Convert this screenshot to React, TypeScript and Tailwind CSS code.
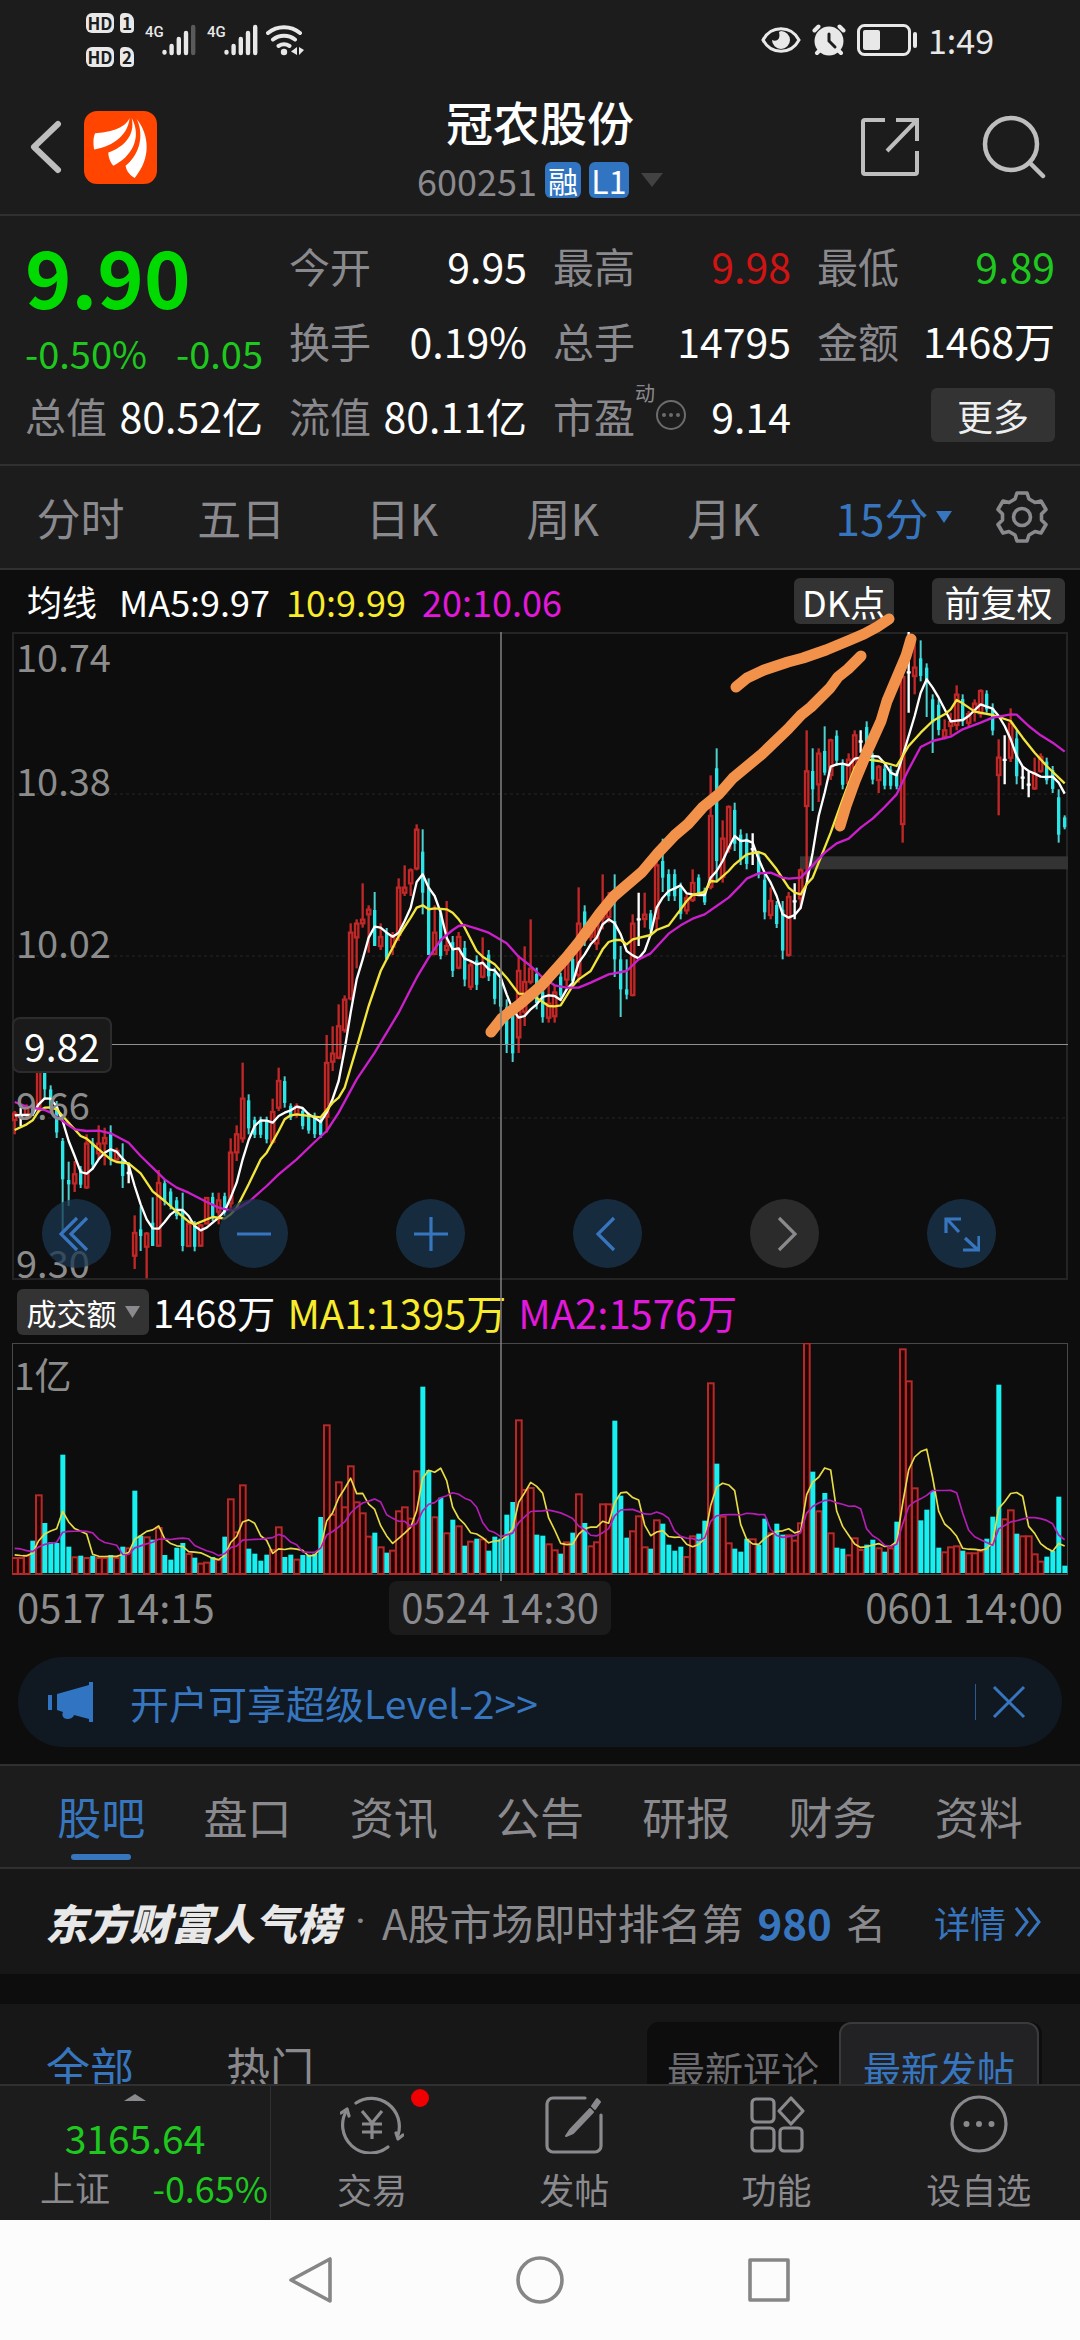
import React from 'react';

type Candle = [high: number, low: number, bodyTop?: number, bodyBottom?: number];
type Point = [x: number, y: number];

/* ---------- chart data ---------- */

// r = up, c = down, w = flat
// x = up candle on a falling volume bar, y = the other way round
const KINDS = [
  'rwrcrccccc',
  'rcrcrrcrcw',
  'xcrcrccccr',
  'crrcrcrrrc',
  'cccrrccrcc',
  'ccrrrrrrrr',
  'crcrrrrrcc',
  'rcrcrcrcrc',
  'ccccrrrccr',
  'rcrcrcrrrr',
  'cccrwrcrcc',
  'ccrrccrcrr',
  'cccwccrccr',
  'wrrcrcrccr',
  'rwccrcycrw',
  'rccccrrrcr',
  'rrccxwrcww',
  'rrcccc',
].join('');

const STEP = 18;

const CANDLES: Candle[] = [
  [1655, 1725, 1660, 1685], [1645, 1700], [1635, 1675], [1630, 1670], [1510, 1660, 1520, 1650], [1510, 1620, 1530, 1590],
  [1578, 1660], [1625, 1736], [1736, 2020, 1745, 1860], [1807, 1940, 1862, 1875], [1805, 1898, 1842, 1875], [1820, 1886],
  [1725, 1889, 1750, 1887], [1736, 1830], [1698, 1800, 1750, 1785], [1705, 1818, 1733, 1755], [1698, 1818, 1720, 1800],
  [1765, 1810], [1752, 1886, 1800, 1850], [1810, 1872], [1968, 2129, 2018, 2092], [1941, 2075, 2010, 2030],
  [2018, 2157, 2020, 2065], [1914, 2060, 1990, 2060], [1832, 2062, 1868, 2062], [1860, 1938], [1887, 1950], [1913, 1980],
  [1900, 2076, 1955, 2060], [1990, 2063, 1990, 2063], [1985, 2076], [1995, 2062, 1995, 2062], [1913, 1995, 1913, 1995],
  [1900, 1985], [1900, 1995, 1920, 1960], [1900, 1970], [1737, 1950, 1777, 1935], [1698, 1805, 1722, 1782],
  [1510, 1750, 1615, 1740], [1605, 1725], [1672, 1736], [1672, 1736], [1672, 1752], [1618, 1753, 1655, 1750],
  [1525, 1655, 1562, 1648], [1551, 1645], [1632, 1682], [1632, 1675], [1645, 1710], [1660, 1723], [1660, 1736],
  [1675, 1736], [1427, 1720, 1508, 1675], [1401, 1535, 1480, 1510], [1335, 1500, 1398, 1498], [1308, 1420, 1318, 1415],
  [1092, 1323, 1117, 1320], [1080, 1227, 1090, 1137], [972, 1105, 1078, 1095], [1038, 1180, 1048, 1068],
  [998, 1160, 1052, 1160], [1092, 1172, 1130, 1163], [1106, 1200, 1120, 1200], [1118, 1187, 1130, 1165],
  [957, 1145, 982, 1130], [918, 1010, 982, 1003], [927, 1010, 930, 975], [795, 933, 808, 930], [810, 1065, 877, 1000],
  [957, 1187, 985, 1187], [1038, 1187, 1117, 1187], [1050, 1200, 1060, 1190], [1025, 1187, 1157, 1175], [1130, 1253],
  [1118, 1230, 1130, 1228], [1145, 1281], [1205, 1292, 1215, 1285], [1188, 1292], [1134, 1257, 1210, 1255], [1172, 1265],
  [1225, 1335], [1240, 1360], [1320, 1481], [1335, 1508], [1188, 1481], [1161, 1400, 1265, 1360], [1080, 1275, 1225, 1270],
  [1225, 1350], [1280, 1390], [1270, 1390, 1330, 1378], [1280, 1390], [1240, 1320], [1170, 1280], [1185, 1280],
  [984, 1270, 1090, 1250], [1038, 1160], [1080, 1145], [1060, 1172], [945, 1110, 1035, 1080], [998, 1090],
  [945, 1253, 1085, 1200], [1160, 1373, 1200, 1290], [1200, 1320, 1290, 1306], [1065, 1311, 1090, 1310], [1000, 1160],
  [1000, 1105, 1063, 1082], [1052, 1120], [900, 1110, 915, 1080], [838, 998, 905, 955], [930, 1025], [930, 1025],
  [970, 1080], [1005, 1065], [930, 1028, 968, 1025], [945, 1010], [985, 1037], [648, 990, 767, 985], [567, 965],
  [783, 970, 835, 955], [738, 880, 740, 870], [730, 875], [810, 917], [822, 930], [822, 917], [880, 957], [940, 1080],
  [984, 1080, 1022, 1070], [1025, 1106], [1025, 1200], [998, 1192, 1010, 1190], [972, 1080], [927, 1050, 930, 1020],
  [513, 960, 633, 743], [567, 755, 635, 690], [567, 728, 580, 678], [501, 648, 575, 640], [538, 662, 540, 650],
  [513, 620], [600, 690], [582, 690], [513, 640, 525, 630], [513, 580], [486, 600], [580, 675], [617, 701, 620, 665],
  [617, 690], [620, 690], [633, 690], [340, 850, 350, 797], [218, 460], [245, 405, 322, 353], [243, 366, 297, 350],
  [312, 473, 325, 370], [405, 581, 420, 490], [420, 528], [480, 540, 510, 535], [460, 528, 485, 503], [378, 513, 403, 500],
  [405, 500], [455, 500], [420, 487, 430, 460], [390, 475, 392, 465], [393, 460], [432, 528], [540, 768, 592, 650],
  [528, 675], [447, 608, 490, 598], [513, 675], [620, 690], [638, 714], [595, 692, 640, 690], [582, 640, 590, 638],
  [595, 675], [620, 701], [690, 850], [768, 810],
];

const MA5 = [
  1668, 1667, 1667, 1666, 1635, 1617, 1618, 1642, 1685, 1745, 1790, 1838, 1843, 1828, 1800, 1780, 1770, 1777, 1798, 1817,
  1880, 1935, 1980, 2007, 2008, 1988, 1965, 1952, 1952, 1970, 2000, 2013, 2005, 1990, 1975, 1955, 1915, 1870, 1800, 1742,
  1700, 1683, 1684, 1690, 1670, 1660, 1653, 1642, 1646, 1665, 1675, 1688, 1660, 1618, 1565, 1470, 1360, 1260, 1200, 1135,
  1102, 1105, 1120, 1132, 1120, 1085, 1045, 968, 945, 985, 1010, 1060, 1135, 1170, 1167, 1198, 1205, 1215, 1210, 1230,
  1233, 1255, 1305, 1350, 1375, 1370, 1350, 1335, 1313, 1308, 1310, 1322, 1290, 1270, 1210, 1185, 1155, 1135, 1095, 1080,
  1092, 1125, 1175, 1188, 1197, 1175, 1125, 1045, 1015, 995, 987, 978, 1002, 1005, 1007, 1007, 955, 935, 905, 865, 830,
  845, 843, 850, 900, 940, 970, 1010, 1065, 1075, 1067, 1045, 970, 880, 770, 700, 622, 615, 613, 618, 598, 595, 592, 590,
  592, 612, 640, 648, 590, 530, 470, 400, 360, 385, 415, 450, 486, 484, 482, 470, 452, 435, 442, 448, 470, 500, 540, 590,
  622, 635, 643, 652, 653, 652, 670, 703,
];

// longer averages are smooth enough to be kept as [bar, value] knots
const MA10: Point[] = [
  [0, 1712], [2, 1695], [3, 1683], [4, 1655], [5, 1645], [6, 1644], [7, 1650], [8, 1670], [11, 1730], [12, 1738],
  [14, 1770], [16, 1800], [17, 1808], [19, 1812], [21, 1842], [23, 1896], [25, 1925], [27, 1957], [29, 1987], [30, 1995],
  [33, 1973], [35, 1978], [36, 1965], [37, 1945], [39, 1875], [41, 1800], [42, 1780], [44, 1715], [45, 1680], [46, 1668],
  [47, 1665], [51, 1674], [53, 1630], [54, 1615], [55, 1585], [57, 1465], [59, 1340], [61, 1235], [62, 1200], [64, 1130],
  [66, 1075], [67, 1045], [68, 1038], [69, 1050], [70, 1047], [72, 1050], [73, 1060], [74, 1080], [75, 1105], [77, 1175],
  [78, 1192], [80, 1215], [82, 1255], [84, 1303], [86, 1304], [88, 1328], [89, 1340], [90, 1341], [91, 1338], [93, 1280],
  [94, 1260], [96, 1235], [98, 1170], [99, 1148], [100, 1142], [101, 1142], [102, 1155], [103, 1140], [106, 1127],
  [107, 1112], [109, 1098], [111, 1050], [112, 1025], [113, 1007], [115, 998], [116, 965], [117, 967], [119, 935],
  [120, 915], [122, 885], [124, 878], [125, 885], [127, 930], [129, 985], [130, 1000], [131, 1005], [132, 975],
  [133, 955], [134, 910], [136, 820], [138, 720], [140, 625], [141, 600], [142, 600], [144, 605], [147, 620], [148, 590],
  [149, 560], [151, 520], [153, 485], [155, 465], [156, 450], [157, 422], [158, 432], [160, 457], [163, 467], [166, 485],
  [168, 535], [170, 580], [172, 620], [175, 672],
];

const MA20: Point[] = [
  [0, 1628], [2, 1642], [5, 1652], [6, 1660], [8, 1685], [10, 1710], [12, 1715], [14, 1714], [16, 1722], [19, 1750],
  [21, 1790], [23, 1825], [25, 1860], [27, 1885], [29, 1900], [32, 1928], [34, 1945], [36, 1953], [37, 1950], [39, 1928],
  [42, 1880], [44, 1845], [47, 1800], [50, 1748], [52, 1715], [54, 1660], [57, 1560], [60, 1480], [62, 1420], [64, 1360],
  [66, 1290], [67, 1255], [69, 1195], [71, 1142], [73, 1112], [74, 1100], [75, 1097], [77, 1108], [79, 1120], [82, 1152],
  [84, 1192], [86, 1220], [88, 1255], [90, 1278], [92, 1285], [94, 1285], [96, 1270], [99, 1245], [102, 1235],
  [104, 1200], [106, 1182], [109, 1123], [111, 1098], [113, 1078], [115, 1065], [117, 1040], [119, 1015], [121, 978],
  [122, 958], [124, 942], [126, 940], [128, 955], [129, 958], [131, 955], [133, 918], [135, 880], [137, 852], [139, 838],
  [141, 805], [143, 778], [145, 743], [147, 705], [149, 630], [151, 563], [153, 545], [156, 532], [158, 510], [161, 490],
  [163, 475], [164, 472], [166, 465], [167, 466], [169, 500], [171, 528], [173, 550], [175, 577],
];

const VOLUMES = [
  51, 51, 58, 100, 239, 153, 95, 93, 358, 82, 53, 55, 51, 55, 51, 51, 57, 51, 82, 80, 250, 115, 113, 103, 141, 57, 43, 79,
  93, 63, 49, 34, 37, 51, 45, 112, 227, 128, 269, 76, 61, 40, 58, 75, 143, 51, 58, 46, 57, 58, 61, 171, 449, 181, 278,
  203, 326, 218, 185, 115, 124, 83, 64, 73, 191, 203, 169, 311, 562, 312, 173, 229, 125, 163, 146, 85, 100, 106, 107, 70,
  112, 106, 178, 216, 464, 255, 261, 118, 115, 92, 74, 61, 98, 124, 242, 153, 86, 98, 212, 212, 460, 235, 109, 131, 176,
  83, 76, 164, 151, 88, 70, 82, 54, 116, 121, 160, 575, 331, 175, 95, 76, 67, 106, 107, 88, 166, 125, 151, 118, 119, 103,
  155, 695, 307, 191, 243, 125, 79, 76, 59, 110, 75, 88, 103, 80, 67, 80, 157, 677, 581, 260, 161, 193, 249, 79, 68, 83,
  86, 70, 65, 65, 71, 106, 172, 568, 167, 194, 121, 116, 116, 62, 40, 52, 70, 232, 25,
];
const EARLIER_VOLUMES = [70, 110, 130, 95, 80, 60, 62, 58, 55];

const candleKind = (i: number) => {
  const k = KINDS[i];
  if (k === 'x') return 'r';
  if (k === 'y') return 'c';
  return k;
};
const volumeUp = (i: number) => 'rwy'.includes(KINDS[i]);
const barX = (i: number) => i * STEP + 8;

const toPoints = (pts: Point[]) => pts.map(([i, v]) => `${barX(i)},${v}`).join(' ');

function volumeAverage(n: number): Point[] {
  const all = [...EARLIER_VOLUMES, ...VOLUMES];
  return VOLUMES.map((_, i) => {
    const end = i + EARLIER_VOLUMES.length + 1;
    const sum = all.slice(end - n, end).reduce((a, b) => a + b, 0);
    return [i, 693 - sum / n];
  });
}

/* ---------- small icons ---------- */

function Triangle({ className, up = false }: { className: string; up?: boolean }) {
  return (
    <svg viewBox="0 0 20 14" preserveAspectRatio="none" className={className} fill="currentColor" aria-hidden>
      <path d={up ? 'M0 14h20L10 0z' : 'M0 0h20L10 14z'} />
    </svg>
  );
}

function Signal({ dimLast = false }: { dimLast?: boolean }) {
  return (
    <svg viewBox="0 0 34 32" className="h-8 w-[34px]" stroke="#e8e8e8" strokeWidth="4.4" strokeLinecap="round" aria-hidden>
      <path d="M2.500 28v.5M9.600 22v7M16.800 15v14M24 9v20" />
      <path d="M31.200 3v26" stroke={dimLast ? '#5a5a5a' : '#e8e8e8'} />
    </svg>
  );
}

function SimBadge({ n }: { n: number }) {
  return (
    <span className="flex gap-[6px] text-[17px] leading-5 font-bold text-[#1c1c1c]">
      <span className="w-7 rounded-md bg-[#e8e8e8] text-center">HD</span>
      <span className="w-[14px] rounded-sm rounded-tr-lg bg-[#e8e8e8] text-center">{n}</span>
    </span>
  );
}

/* ---------- sections ---------- */

function StatusBar() {
  return (
    <div className="flex h-20 items-center justify-between px-[86px] text-[#e8e8e8]">
      <div className="flex items-center">
        <div className="flex flex-col gap-[14px]">
          <SimBadge n={1} />
          <SimBadge n={2} />
        </div>
        <span className="mb-4 ml-[11px] w-[17px] font-['Roboto'] text-[15px] leading-4 font-medium">4G</span>
        <Signal dimLast />
        <span className="mb-4 ml-[11px] w-[17px] font-['Roboto'] text-[15px] leading-4 font-medium">4G</span>
        <Signal />
        <svg viewBox="0 0 38 32" className="ml-2 h-8 w-[38px]" fill="none" stroke="#e8e8e8" strokeWidth="4" strokeLinecap="round" aria-hidden>
          <path d="M2 9a25 25 0 0 1 32 0M7 15.500a18 18 0 0 1 22 0M12.500 22a10 10 0 0 1 11 0" />
          <circle cx="18" cy="28" r="3.200" fill="#e8e8e8" stroke="none" />
          <path d="M31 23v8l-6-3.500zM33 23v8l5-5z" fill="#e8e8e8" stroke="none" />
        </svg>
      </div>
      <div className="flex items-center gap-[11px]">
        <svg viewBox="0 0 40 28" className="h-7 w-10" fill="none" stroke="#e8e8e8" strokeWidth="3" aria-hidden>
          <path d="M2 14C10-1 30-1 38 14 30 29 10 29 2 14z" />
          <path d="M20 5a9 9 0 1 1-9 9c4 2 9 0 7-8z" fill="#e8e8e8" stroke="none" />
        </svg>
        <svg viewBox="0 0 34 32" className="h-8 w-[34px]" fill="none" stroke="#e8e8e8" strokeWidth="4" strokeLinecap="round" aria-hidden>
          <circle cx="17" cy="17" r="14.500" fill="#e8e8e8" stroke="none" />
          <path d="M2.500 6.500l4-4M31.500 6.500l-4-4M5 29l3-3M29 29l-3-3" />
          <path d="M17 10v7l6 6" stroke="#1c1c1c" strokeWidth="3" />
        </svg>
        <svg viewBox="0 0 60 34" className="h-[34px] w-[60px]" aria-hidden>
          <rect x="1.500" y="2.500" width="51" height="29" rx="6" fill="none" stroke="#e8e8e8" strokeWidth="3" />
          <rect x="6" y="7" width="17" height="20" rx="2" fill="#e8e8e8" />
          <rect x="56" y="9" width="4" height="16" rx="2" fill="#e8e8e8" />
        </svg>
        <span className="text-[34px] leading-9">1:49</span>
      </div>
    </div>
  );
}

function Header() {
  return (
    <header className="grid h-[136px] grid-cols-[1fr_auto_1fr] items-center border-b-2 border-[#303030]">
      <div className="flex items-center gap-[22px] pl-[30px]">
        <button type="button" aria-label="返回">
          <svg viewBox="0 0 32 54" className="h-[54px] w-8" fill="none" stroke="#bebebe" strokeWidth="6" strokeLinecap="round" strokeLinejoin="round">
            <path d="M28 4L4 27l24 23" />
          </svg>
        </button>
        <svg viewBox="0 0 72 72" className="size-[73px]" aria-hidden>
          <rect width="72" height="72" rx="13" fill="#ff4500" />
          <g fill="#fff">
            <path d="M45 7C40 18 24 21 11 22c-2 4-2 10-1 16C24 36 43 27 45 7z" />
            <path d="M47 7c4 17-8 29-23 34 0 5 2 10 5 13C46 46 58 27 47 7z" />
            <path d="M52 8c12 15 15 38-2 58-4-2-8-6-9-12C54 44 60 25 52 8z" />
          </g>
        </svg>
      </div>
      <div className="flex flex-col items-center gap-4">
        <h1 className="text-[47px] leading-[50px] font-medium text-white">冠农股份</h1>
        <div className="flex items-center gap-2 text-[36px] leading-9 text-[#8a8a8e]">
          <span>600251</span>
          <span className="w-9 rounded-md bg-[#3174c2] text-center text-[30px] text-white">融</span>
          <span className="w-10 rounded-md bg-[#3174c2] text-center text-[32px] text-white">L1</span>
          <Triangle className="ml-1 h-[14px] w-[22px] text-[#424242]" />
        </div>
      </div>
      <div className="flex items-center justify-end gap-[62px] pr-[34px]">
        <button type="button" aria-label="分享">
          <svg viewBox="0 0 60 60" className="size-[60px]" fill="none" stroke="#bebebe" strokeWidth="4" strokeLinejoin="round">
            <path d="M25 3H5a2 2 0 0 0-2 2v50a2 2 0 0 0 2 2h50a2 2 0 0 0 2-2V34" />
            <path d="M36 3h21v21M57 3L27 34" strokeLinejoin="miter" />
          </svg>
        </button>
        <button type="button" aria-label="搜索">
          <svg viewBox="0 0 64 64" className="size-16" fill="none" stroke="#bebebe" strokeWidth="4.500" strokeLinecap="round">
            <circle cx="29" cy="29" r="26" />
            <path d="M48 48l13 13" />
          </svg>
        </button>
      </div>
    </header>
  );
}

function Stat({ label, value, color = 'text-white' }: { label: string; value: string; color?: string }) {
  return (
    <div className="flex items-center justify-between whitespace-nowrap">
      <dt className="text-[#8a8a8e]">{label}</dt>
      <dd className={color}>{value}</dd>
    </div>
  );
}

function Quote() {
  return (
    <section className="grid h-[250px] grid-cols-4 grid-rows-[75px_75px_75px] gap-x-[26px] border-b-2 border-[#303030] px-[25px] pt-[11px] text-[41px] leading-[48px]">
      <div className="row-span-2 flex flex-col justify-between pt-2 pb-[2px] text-[#00da00]">
        <strong className="text-[79px] leading-[80px] font-bold">9.90</strong>
        <div className="flex justify-between text-[38px] leading-[44px] text-[#1ec81e]">
          <span>-0.50%</span>
          <span>-0.05</span>
        </div>
      </div>
      <Stat label="今开" value="9.95" />
      <Stat label="最高" value="9.98" color="text-[#d01414]" />
      <Stat label="最低" value="9.89" color="text-[#1ec81e]" />
      <Stat label="换手" value="0.19%" />
      <Stat label="总手" value="14795" />
      <Stat label="金额" value="1468万" />
      <Stat label="总值" value="80.52亿" />
      <Stat label="流值" value="80.11亿" />
      <div className="flex items-center justify-between whitespace-nowrap">
        <dt className="flex items-center text-[#8a8a8e]">
          市盈
          <sup className="mb-6 text-xl leading-5">动</sup>
          <svg viewBox="0 0 32 32" className="size-8" aria-hidden>
            <circle cx="16" cy="16" r="14" fill="none" stroke="#6c6c70" strokeWidth="2" />
            <g fill="#6c6c70">
              <circle cx="9" cy="16" r="2" />
              <circle cx="16" cy="16" r="2" />
              <circle cx="23" cy="16" r="2" />
            </g>
          </svg>
        </dt>
        <dd className="text-white">9.14</dd>
      </div>
      <div className="flex items-center justify-end">
        <button type="button" className="h-[54px] w-[124px] rounded-md bg-[#333] text-[36px] leading-[50px] text-[#eee]">
          更多
        </button>
      </div>
    </section>
  );
}

function PeriodTabs() {
  return (
    <nav className="flex h-[104px] items-center border-b-2 border-[#303030] text-[44px] leading-[52px] text-[#8a8a8e]">
      {['分时', '五日', '日K', '周K', '月K'].map((t) => (
        <button key={t} type="button" className="flex-1">
          {t}
        </button>
      ))}
      <button type="button" className="flex w-[180px] items-center justify-center gap-2 text-[#3776bf]">
        15分
        <Triangle className="h-3 w-4" />
      </button>
      <button type="button" aria-label="设置" className="mr-8 ml-3">
        <svg viewBox="0 0 52 52" className="size-[52px]" fill="none" stroke="#8a8a8e" strokeWidth="3.600" strokeLinejoin="round">
          <path d="M21 2h10l2 6 6 3.500 6-1.500 5 8.500-4.500 4.500v6l4.500 4.500-5 8.500-6-1.500-6 3.500-2 6H21l-2-6-6-3.500-6 1.500-5-8.500L6.500 29v-6L2 18.500 7 10l6 1.500L19 8z" />
          <circle cx="26" cy="26" r="8.500" />
        </svg>
      </button>
    </nav>
  );
}

function PriceCandles() {
  return (
    <svg viewBox="0 218 3168 1944" preserveAspectRatio="none" className="absolute inset-0 h-full w-full" aria-hidden>
      <g stroke="#1e1e1e" strokeWidth="4" strokeDasharray="9 9">
        <path d="M0 704h3168M0 1190h3168M0 1676h3168" />
      </g>
      <rect x="2364" y="891" width="804" height="39" fill="#333" />
      {CANDLES.map(([high, low, top, bottom], i) => {
        const x = barX(i);
        const kind = candleKind(i);
        const pad = (low - high) * 0.15;
        const t = top ?? high + pad;
        const b = bottom ?? low - pad;
        if (kind === 'w') {
          const mid = (high + low) / 2;
          return <path key={i} d={`M${x} ${high}V${low}M${x - 6} ${mid}h12`} stroke="#fff" strokeWidth="7" />;
        }
        if (kind === 'c') {
          return (
            <g key={i}>
              <path d={`M${x} ${high}V${low}`} stroke="#4cd0d0" strokeWidth="6" />
              <rect x={x - 5} y={t} width="10" height={b - t} fill="#2ae6e6" />
            </g>
          );
        }
        return (
          <g key={i} stroke="#c02828" strokeWidth="7">
            <path d={`M${x} ${high}V${low}`} />
            <rect x={x - 5} y={t + 3} width="10" height={Math.max(b - t - 6, 3)} fill="#2a0505" />
          </g>
        );
      })}
      <g fill="none" strokeWidth="7" strokeLinejoin="round">
        <polyline points={toPoints(MA5.map((v, i) => [i, v] as Point))} stroke="#fff" />
        <polyline points={toPoints(MA10)} stroke="#f2e63c" />
        <polyline points={toPoints(MA20)} stroke="#cc1fcc" />
      </g>
    </svg>
  );
}

// hand-drawn arrow over the price area
function Annotation() {
  return (
    <svg
      viewBox="12 633 1056 648"
      preserveAspectRatio="none"
      className="pointer-events-none absolute inset-0 h-full w-full overflow-visible"
      fill="none"
      stroke="#f2924a"
      strokeWidth="11"
      strokeLinecap="round"
      strokeLinejoin="round"
      aria-hidden
    >
      <path d="M491 1033L502 1019 520 1005 541 987 566 959 579 943 600 914 614 897 642 873 658 854 675 836 688 825 703 808 719 795 733 779 762 755 788 730 801 716 811 708 822 697 830 689 838 678 848 670 861 657" />
      <path d="M736 688L747 679 764 671 788 663 803 659 826 651 850 641 864 635 877 628 889 620" />
      <path d="M911 640L906 657 895 683 887 702 881 722 867 753 855 782 846 807 840 827" />
    </svg>
  );
}

const BUTTON_ICONS = [
  { label: '最左', path: 'M18 2L2 18l16 16M28 2L12 18l16 16' },
  { label: '缩小', path: 'M1 18h34' },
  { label: '放大', path: 'M1 18h34M18 1v34' },
  { label: '左移', path: 'M24 2L8 18l16 16' },
  { label: '右移', path: 'M12 2l16 16-16 16', muted: true },
  { label: '全屏', path: 'M2 17V3h15M3 3l12 13M35 20v14H19M34 34L21 22' },
];

function ChartButtons() {
  return (
    <div className="absolute right-[72px] bottom-3 left-[30px] flex justify-between">
      {BUTTON_ICONS.map((b) => (
        <button
          key={b.label}
          type="button"
          aria-label={b.label}
          className={`flex size-[69px] items-center justify-center rounded-full ${b.muted ? 'bg-[#2b2b2b] text-[#8a8a8e]' : 'bg-[#1b3550]/75 text-[#3776bf]'}`}
        >
          <svg viewBox="0 0 36 36" className="size-9" fill="none" stroke="currentColor" strokeWidth="3.200">
            <path d={b.path} />
          </svg>
        </button>
      ))}
    </div>
  );
}

function VolumeBars() {
  return (
    <svg viewBox="0 0 3168 696" preserveAspectRatio="none" className="absolute inset-0 h-full w-full" aria-hidden>
      {VOLUMES.map((v, i) =>
        volumeUp(i) ? (
          <rect key={i} x={barX(i) - 8} y={696 - v} width="17" height={v - 3} fill="#240000" stroke="#b42a2a" strokeWidth="6" />
        ) : (
          <rect key={i} x={barX(i) - 7} y={693 - v} width="15" height={v - 3} fill="#16f0f0" />
        ),
      )}
      <g fill="none" strokeWidth="5" strokeLinejoin="round">
        <polyline points={toPoints(volumeAverage(5))} stroke="#e8dc46" />
        <polyline points={toPoints(volumeAverage(10))} stroke="#b41eb4" />
      </g>
    </svg>
  );
}

function Chart() {
  const crosshair = { left: `${(488 / 1056) * 100}%` };
  return (
    <section className="bg-[#0d0d0d] px-3">
      <div className="flex h-[62px] items-center pl-[15px] text-[36px] leading-[46px] text-white">
        <span className="text-[35px]">均线</span>
        <span className="ml-[22px]">MA5:9.97</span>
        <span className="ml-4 text-[#f8ec2c]">10:9.99</span>
        <span className="ml-4 text-[#e218dc]">20:10.06</span>
        <button type="button" className="ml-auto w-[100px] rounded-md bg-[#333]">
          DK点
        </button>
        <button type="button" className="mr-[3px] ml-[38px] w-[133px] rounded-md bg-[#333]">
          前复权
        </button>
      </div>

      <div className="relative">
        <div className="relative h-[648px] outline-2 -outline-offset-2 outline-[#242424]">
          <PriceCandles />
          <div className="relative grid h-full grid-rows-4 text-[38px] leading-6 text-[#8c8c8c]">
            <div className="flex flex-col justify-between pt-3 pb-[2px] pl-1">
              <span>10.74</span>
              <span>10.38</span>
            </div>
            <div className="flex items-end pb-[2px] pl-1">10.02</div>
            <div className="flex items-end pb-[2px] pl-1">9.66</div>
            <div className="flex items-end pb-[6px] pl-1">9.30</div>
          </div>
          <div className="absolute inset-x-0 top-[412px] h-px bg-[#909090]" />
          <output className="absolute top-[385px] left-0 w-[100px] rounded-lg border-2 border-[#2c2c2c] bg-[#1a1a1a] text-center text-[39px] leading-[52px] text-white">
            9.82
          </output>
          <ChartButtons />
          <Annotation />
        </div>

        <div className="flex h-[63px] items-center gap-3 pl-[5px] text-[40px] leading-[46px] whitespace-nowrap text-white">
          <button type="button" className="flex w-[132px] items-center justify-center gap-2 rounded-md bg-[#333] text-[30px] leading-[46px]">
            成交额
            <Triangle className="h-3 w-[15px] text-[#8a8a8e]" />
          </button>
          <span className="-ml-2 text-[38px]">1468万</span>
          <span className="text-[#f8ec2c]">MA1:1395万</span>
          <span className="text-[#e218dc]">MA2:1576万</span>
        </div>

        <div className="relative h-[232px] outline-1 -outline-offset-1 outline-[#484848]">
          <VolumeBars />
          <span className="relative block pt-2 pl-[2px] text-[37px] leading-[46px] text-[#8c8c8c]">1亿</span>
        </div>

        <div className="flex h-[66px] items-center justify-between px-[5px] pb-1 text-[40px] leading-[52px] text-[#8c8c8c]">
          <span>0517 14:15</span>
          <span>0601 14:00</span>
        </div>
        <div className="absolute top-0 bottom-[60px] w-[2px] bg-[#808080]/75" style={crosshair} />
        <output
          className="absolute bottom-[6px] w-[222px] -translate-x-1/2 rounded-lg bg-[#1b1b1b] pb-1 text-center text-[40px] leading-[50px] text-[#8a8a8e]"
          style={crosshair}
        >
          0524 14:30
        </output>
      </div>
    </section>
  );
}

function Banner() {
  return (
    <div className="bg-[#0d0d0d] px-[18px] pt-4 pb-[17px]">
      <div className="flex h-[90px] items-center rounded-full bg-[#101922] pr-9 pl-[30px] text-[#3776bf]">
        <svg viewBox="0 0 46 40" className="h-10 w-[46px]" fill="#3174c2" aria-hidden>
          <path d="M0 13h4v15H0zM9 12L41 3V0h4v40h-4v-3l-15-4c-1 4-7 5-10 3-2-2-2-4-1-6l-6-2z" />
        </svg>
        <a href="#level2" className="ml-9 text-[39px] leading-[52px]">
          开户可享超级Level-2&gt;&gt;
        </a>
        <span className="ml-auto h-9 w-px bg-[#2a5a92]" />
        <button type="button" aria-label="关闭" className="ml-4">
          <svg viewBox="0 0 34 34" className="size-[34px]" fill="none" stroke="currentColor" strokeWidth="3">
            <path d="M2 2l30 30M32 2L2 32" />
          </svg>
        </button>
      </div>
    </div>
  );
}

function InfoTabs() {
  const tabs = ['股吧', '盘口', '资讯', '公告', '研报', '财务', '资料'];
  return (
    <nav className="flex h-[105px] border-y-2 border-[#303030] px-7 text-[44px] leading-[52px] text-[#8a8a8e]">
      {tabs.map((t, i) => (
        <button key={t} type="button" className={`flex flex-1 flex-col items-center pt-6 ${i === 0 ? 'text-[#3776bf]' : ''}`}>
          {t}
          {i === 0 && <span className="mt-3 h-[6px] w-[60px] rounded-full bg-[#3776bf]" />}
        </button>
      ))}
    </nav>
  );
}

function RankRow() {
  return (
    <div className="flex h-[105px] items-center bg-[#171717] pr-[38px] pl-[45px] text-[42px] leading-[52px] whitespace-nowrap text-[#8a8a8e]">
      <strong className="font-black text-[#e8e8e8] italic">东方财富人气榜</strong>
      <span className="mx-4 font-['Roboto']">·</span>
      <span>A股市场即时排名第</span>
      <strong className="mx-[14px] text-[#3776bf]">980</strong>
      <span className="text-[40px]">名</span>
      <a href="#rank" className="ml-auto flex items-center gap-2 text-[36px] text-[#3776bf]">
        详情
        <svg viewBox="0 0 28 30" className="h-[30px] w-7" fill="none" stroke="currentColor" strokeWidth="3">
          <path d="M2 1l11 14L2 29M14 1l11 14-11 14" />
        </svg>
      </a>
    </div>
  );
}

function FeedHeader() {
  return (
    <div className="flex h-20 items-start overflow-hidden bg-[#171717] pr-[38px] pl-[46px] text-[44px] leading-[52px]">
      <button type="button" className="mt-9 text-[#3776bf]">
        全部
      </button>
      <button type="button" className="mt-9 ml-[92px] text-[#8a8a8e]">
        热门
      </button>
      <div className="mt-[18px] ml-auto flex h-[92px] shrink-0 rounded-xl bg-[#0d0d0d] text-[38px]">
        <button type="button" className="w-48 text-[#6c6c70]">
          最新评论
        </button>
        <button type="button" className="mr-[3px] w-[200px] rounded-xl border-2 border-[#3a3a3c] bg-[#222224] text-[#3776bf]">
          最新发帖
        </button>
      </div>
    </div>
  );
}

function BottomItem({ label, dot = false, children }: { label: string; dot?: boolean; children: React.ReactNode }) {
  return (
    <button type="button" className="flex flex-1 flex-col items-center gap-[10px] pt-2">
      <span className="relative">
        <svg viewBox="0 0 64 60" className="h-[60px] w-16" fill="none" stroke="#8a8a8e" strokeWidth="3.200" strokeLinecap="round" strokeLinejoin="round">
          {children}
        </svg>
        {dot && <span className="absolute -top-[5px] -right-[25px] size-[18px] rounded-full bg-[#f00000]" />}
      </span>
      <span className="text-[35px] leading-[50px]">{label}</span>
    </button>
  );
}

function BottomBar() {
  return (
    <footer className="flex h-[136px] border-t-2 border-[#303030] bg-[#1c1c1c] text-[#8a8a8e]">
      <a href="#index" className="flex w-[271px] flex-col items-center border-r border-[#303030] pt-2">
        <Triangle up className="h-[7px] w-[22px]" />
        <span className="mt-[10px] text-[39px] leading-[52px] text-[#1ec81e]">3165.64</span>
        <span className="flex w-full justify-between pr-[2px] pl-10 text-[36px] leading-[48px]">
          <span className="text-[35px]">上证</span>
          <span className="text-[#1ec81e]">-0.65%</span>
        </span>
      </a>
      <BottomItem label="交易" dot>
        <path d="M16 9a28 28 0 0 1 42 32M48 53A28 28 0 0 1 7 16" />
        <path d="M1 19l6-4 2 7M63 41l-5 4-2-6" />
        <path d="M22 17l10 12 10-12M22 30h20M22 38h20M32 29v16" strokeLinecap="butt" />
      </BottomItem>
      <BottomItem label="发帖">
        <path d="M43 4H11a6 6 0 0 0-6 6v42a6 6 0 0 0 6 6h42a6 6 0 0 0 6-6V21" />
        <path d="M50 12l5-7 3 3-5 7zM48 15L28 36l-4 6 7-3 20-21z" fill="#8a8a8e" strokeWidth="2" />
      </BottomItem>
      <BottomItem label="功能">
        <rect x="7" y="5" width="22" height="23" rx="4" />
        <rect x="7" y="34" width="22" height="23" rx="4" />
        <rect x="35" y="34" width="22" height="23" rx="4" />
        <path d="M46 4l12 13-12 13-12-13z" />
      </BottomItem>
      <BottomItem label="设自选">
        <circle cx="32" cy="30" r="27" />
        <g fill="#8a8a8e" stroke="none">
          <circle cx="19.500" cy="30" r="3" />
          <circle cx="32" cy="30" r="3" />
          <circle cx="44.500" cy="30" r="3" />
        </g>
      </BottomItem>
    </footer>
  );
}

function SystemNav() {
  const keys = [
    { label: '后退', path: 'M43 3v42L4 24z' },
    { label: '主页', path: 'M24 2a22 22 0 1 0 0 44 22 22 0 0 0 0-44z' },
    { label: '最近', path: 'M5 4h38v40H5z' },
  ];
  return (
    <div className="flex h-[120px] items-center justify-center gap-[181px] bg-[#fcfcfc]">
      {keys.map((k) => (
        <button key={k.label} type="button" aria-label={k.label}>
          <svg viewBox="0 0 48 48" className="size-12" fill="none" stroke="#868686" strokeWidth="3.600" strokeLinejoin="round">
            <path d={k.path} />
          </svg>
        </button>
      ))}
    </div>
  );
}

export default function App() {
  return (
    <div className="flex min-h-screen flex-col bg-[#1c1c1c] font-['Noto_Sans_CJK_SC',sans-serif]">
      <StatusBar />
      <Header />
      <Quote />
      <PeriodTabs />
      <Chart />
      <Banner />
      <InfoTabs />
      <RankRow />
      <div className="h-[30px] bg-[#0d0d0d]" />
      <FeedHeader />
      <BottomBar />
      <SystemNav />
    </div>
  );
}
